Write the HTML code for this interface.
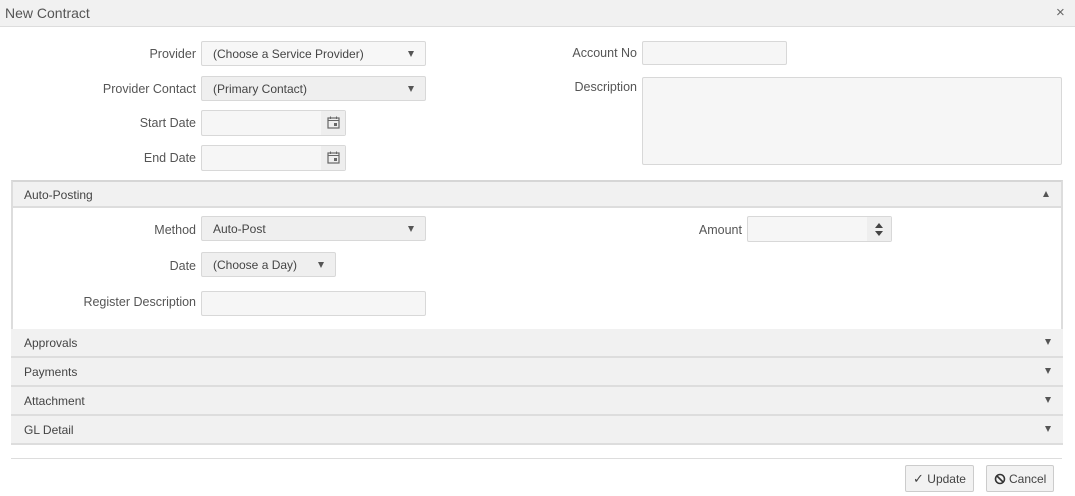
<!DOCTYPE html><html><head><style>
body{margin:0;width:1075px;height:496px;background:#fff;font-family:"Liberation Sans",sans-serif;font-size:12px;color:#444;position:relative;overflow:hidden}
.a{position:absolute;box-sizing:border-box}
.hd{left:0;top:0;width:1075px;height:27px;background:#f1f1f1;border-bottom:1px solid #ddd}
.lbl{text-align:right;line-height:27px;color:#555;font-size:12.5px}
.in{border:1px solid #d8d8d8;background:#f6f6f6;border-radius:2px}
.sel{border:1px solid #d8d8d8;background:#f6f6f6;border-radius:2px;padding-left:11px;line-height:25px;font-size:12px;color:#444}
.sel:after{content:"";position:absolute;right:11px;top:9px;border-left:3.5px solid transparent;border-right:3.5px solid transparent;border-top:6px solid #555}
.bar{left:11px;width:1052px;background:#f1f1f1;border-bottom:2px solid #ddd;padding-left:13px;line-height:28px;font-size:12px;color:#444}
.bar:after{content:"";position:absolute;right:12px;top:10px;border-left:3.5px solid transparent;border-right:3.5px solid transparent;border-top:6px solid #555}
.cal{position:absolute;right:0;top:0;width:24px;height:100%;background:#eee}
.btn{border:1px solid #ccc;background:#f2f2f2;border-radius:2px;line-height:26px;font-size:12px;color:#444;text-align:center}
</style></head><body>
<div class="a hd"></div>
<div class="a" style="left:5px;top:5px;font-size:14px;color:#555">New Contract</div>
<div class="a" style="left:1056px;top:4px;font-size:15px;color:#666">×</div>

<div class="a lbl" style="left:0;width:196px;top:41px">Provider</div>
<div class="a sel" style="left:201px;top:41px;width:225px;height:25px;background:#f7f7f7">(Choose a Service Provider)</div>
<div class="a lbl" style="left:0;width:196px;top:76px">Provider Contact</div>
<div class="a sel" style="left:201px;top:76px;width:225px;height:25px;background:#efefef">(Primary Contact)</div>
<div class="a lbl" style="left:0;width:196px;top:110px">Start Date</div>
<div class="a in" style="left:201px;top:110px;width:145px;height:26px"><div class="cal"><svg width="24" height="24" viewBox="0 0 24 24"><rect x="7" y="7" width="11" height="10" fill="none" stroke="#666" stroke-width="1.2"/><line x1="7" y1="9.5" x2="18" y2="9.5" stroke="#666"/><rect x="13" y="12" width="3" height="3" fill="#666"/><line x1="9.5" y1="5.5" x2="9.5" y2="8" stroke="#666"/><line x1="15.5" y1="5.5" x2="15.5" y2="8" stroke="#666"/></svg></div></div>
<div class="a lbl" style="left:0;width:196px;top:145px">End Date</div>
<div class="a in" style="left:201px;top:145px;width:145px;height:26px"><div class="cal"><svg width="24" height="24" viewBox="0 0 24 24"><rect x="7" y="7" width="11" height="10" fill="none" stroke="#666" stroke-width="1.2"/><line x1="7" y1="9.5" x2="18" y2="9.5" stroke="#666"/><rect x="13" y="12" width="3" height="3" fill="#666"/><line x1="9.5" y1="5.5" x2="9.5" y2="8" stroke="#666"/><line x1="15.5" y1="5.5" x2="15.5" y2="8" stroke="#666"/></svg></div></div>

<div class="a lbl" style="left:500px;width:137px;top:40px">Account No</div>
<div class="a in" style="left:642px;top:41px;width:145px;height:24px"></div>
<div class="a lbl" style="left:500px;width:137px;top:74px">Description</div>
<div class="a in" style="left:642px;top:77px;width:420px;height:88px"></div>

<div class="a" style="left:11px;top:180px;width:1052px;height:150px;border:2px solid #ddd;border-bottom:none;border-top:2px solid #d6d6d6"></div>
<div class="a" style="top:182px;height:26px;left:13px;width:1048px;padding-left:11px;line-height:26px;background:#f1f1f1;border-bottom:2px solid #ddd">Auto-Posting</div>
<div class="a" style="left:1043px;top:191px;border-left:3.5px solid transparent;border-right:3.5px solid transparent;border-bottom:6px solid #555"></div>

<div class="a lbl" style="left:0;width:196px;top:217px">Method</div>
<div class="a sel" style="left:201px;top:216px;width:225px;height:25px;background:#efefef">Auto-Post</div>
<div class="a lbl" style="left:600px;width:142px;top:217px">Amount</div>
<div class="a in" style="left:747px;top:216px;width:145px;height:26px"><div class="cal" style="background:#eee"><svg width="24" height="24" viewBox="0 0 24 24"><path d="M8 11h8l-4-5z M8 14h8l-4 5z" fill="#444"/></svg></div></div>
<div class="a lbl" style="left:0;width:196px;top:253px">Date</div>
<div class="a sel" style="left:201px;top:252px;width:135px;height:25px;background:#efefef">(Choose a Day)</div>
<div class="a lbl" style="left:0;width:196px;top:289px">Register Description</div>
<div class="a in" style="left:201px;top:291px;width:225px;height:25px"></div>

<div class="a bar" style="top:329px;height:29px">Approvals</div>
<div class="a bar" style="top:358px;height:29px">Payments</div>
<div class="a bar" style="top:387px;height:29px">Attachment</div>
<div class="a bar" style="top:416px;height:29px">GL Detail</div>

<div class="a" style="left:11px;top:458px;width:1051px;height:1px;background:#ddd"></div>
<div class="a btn" style="left:905px;top:465px;width:69px;height:27px"><span style="font-size:13px">✓</span> Update</div>
<div class="a btn" style="left:986px;top:465px;width:68px;height:27px"><svg width="12" height="12" viewBox="0 0 12 12" style="vertical-align:-2px"><circle cx="6" cy="6" r="4.5" fill="none" stroke="#333" stroke-width="1.6"/><line x1="3" y1="3" x2="9" y2="9" stroke="#333" stroke-width="1.6"/></svg> Cancel</div>
</body></html>
